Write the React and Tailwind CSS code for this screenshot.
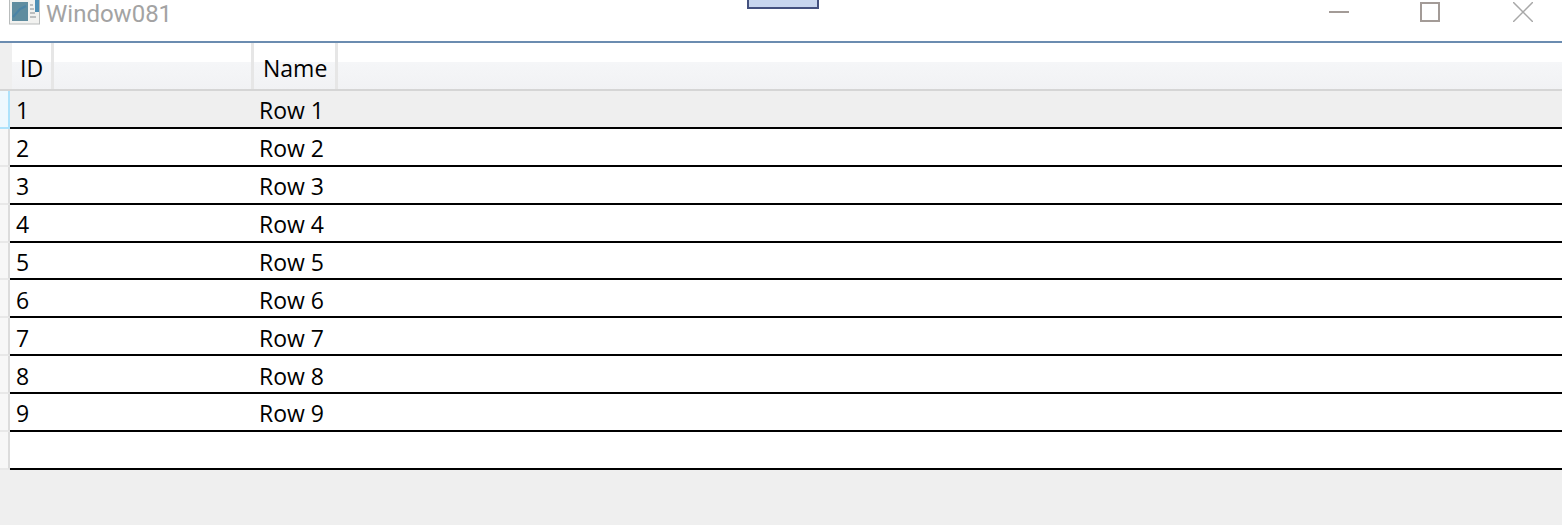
import React from 'react';

const rows = ['1', '2', '3', '4', '5', '6', '7', '8', '9', ''];

const TitleIcon = () => (
  <svg width="32" height="25" viewBox="0 0 32 25" className="shrink-0">
    <rect x="0.5" y="-1" width="30" height="25" fill="#f2f2f0" stroke="#b9bcbc" />
    <rect x="3" y="2" width="16" height="19" fill="#5f8c9f" />
    <path d="M4 17 L11 9 L17 6" stroke="#4a83a6" strokeWidth="2" fill="none" />
    <path d="M21 5h3M21 9h4M21 13h5M21 17h6" stroke="#bcbfc0" strokeWidth="2" />
    <rect x="26" y="0" width="4" height="12" fill="#4f8fb5" />
  </svg>
);

const Row = ({ id, selected }) => (
  <div className="flex h-[37.88px]">
    <div className={`w-[10px] shrink-0 border-r-2 border-b-2 ${selected ? 'bg-[#eef8fe] border-r-[#aee2fb] border-b-[#aee2fb]' : 'bg-[#f7f7f7] border-r-[#dcdcdc] border-b-[#e8e8e8]'}`} />
    <div className={`flex flex-1 items-center border-b-2 border-black pt-[4px] text-[23px] leading-none text-black ${selected ? 'bg-[#efefef]' : 'bg-white'}`}>
      <div className="w-[249px] pl-[6px]">{id}</div>
      <div>{id && `Row ${id}`}</div>
    </div>
  </div>
);

export default function App() {
  return (
    <div className="flex h-[525px] w-[1562px] flex-col overflow-hidden bg-[#efefef] font-['Open_Sans','Noto_Sans',sans-serif]">
      <div className="relative flex h-[41px] shrink-0 items-start bg-white pl-[9px]">
        <TitleIcon />
        <span className="ml-[5px] font-['Roboto',sans-serif] text-[24px] leading-[29px] text-[#a3a3a3]">Window081</span>
        <div className="absolute left-[747px] top-0 h-[9px] w-[72px] border-2 border-t-0 border-[#44517e] bg-[#c8d6ee]" />
        <div className="ml-auto flex text-[#a39b97]">
          <div className="mt-[11px] mr-[71px] h-[2px] w-[20px] bg-current" />
          <div className="mt-[2px] mr-[73px] h-[20px] w-[20px] border-2 border-current" />
          <svg width="20" height="20" viewBox="0 0 20 20" className="mt-[2px] mr-[29px]">
            <path d="M0 0 L20 20 M20 0 L0 20" stroke="#a8a8a8" strokeWidth="1.5" />
          </svg>
        </div>
      </div>
      <div className="h-[2px] shrink-0 bg-[#6b8cb0]" />
      <div className="flex h-[48px] shrink-0 border-b-2 border-[#d5d5d5] bg-[linear-gradient(#ffffff_0,#ffffff_19px,#f5f6f8_19px,#f1f2f4_100%)] text-[23px] leading-none text-black">
        <div className="w-[12px] shrink-0 bg-[#efefef]" />
        <div className="flex w-[42px] items-end border-r-[3px] border-[#e6e6e6] pb-[9px] pl-[8px]">ID</div>
        <div className="w-[200px] border-r-[3px] border-[#e6e6e6]" />
        <div className="flex w-[84px] items-end border-r-[3px] border-[#e6e6e6] pb-[9px] pl-[9px]">Name</div>
      </div>
      <div>
        {rows.map((id, i) => (
          <Row key={i} id={id} selected={i === 0} />
        ))}
      </div>
    </div>
  );
}
